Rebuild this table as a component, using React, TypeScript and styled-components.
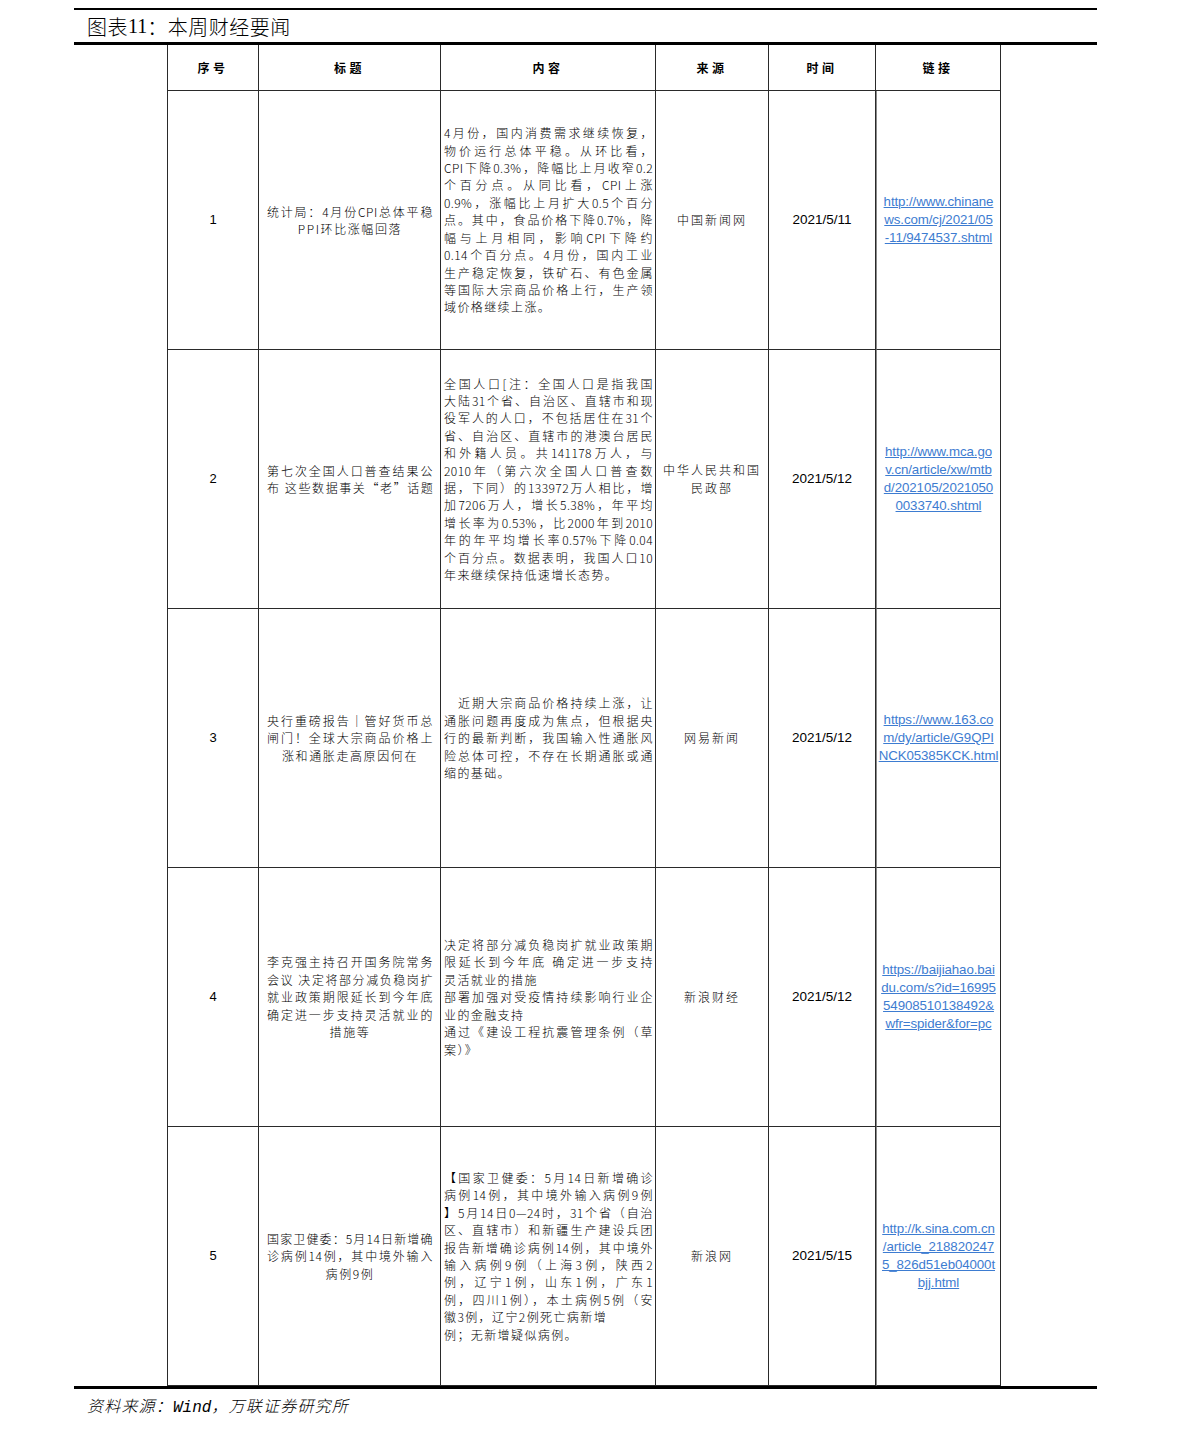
import React from 'react';
import styled, { createGlobalStyle } from 'styled-components';

const GlobalStyle = createGlobalStyle`
  html, body {
    margin: 0;
    padding: 0;
    background: #ffffff;
  }
`;

type NewsRow = {
  no: string,
  title: string[],
  content: string[][],
  source: string[],
  date: string,
  link: string[]
};

const columns = ['序号', '标题', '内容', '来源', '时间', '链接'];

const rows: NewsRow[] = [
  {
    no: '1',
    title: ['统计局：4月份CPI总体平稳', 'PPI环比涨幅回落'],
    content: [[
      '4月份，国内消费需求继续恢复，',
      '物价运行总体平稳。从环比看，',
      'CPI下降0.3%，降幅比上月收窄0.2',
      '个百分点。从同比看，CPI上涨',
      '0.9%，涨幅比上月扩大0.5个百分',
      '点。其中，食品价格下降0.7%，降',
      '幅与上月相同，影响CPI下降约',
      '0.14个百分点。4月份，国内工业',
      '生产稳定恢复，铁矿石、有色金属',
      '等国际大宗商品价格上行，生产领',
      '域价格继续上涨。'
    ]],
    source: ['中国新闻网'],
    date: '2021/5/11',
    link: ['http://www.chinane', 'ws.com/cj/2021/05', '-11/9474537.shtml']
  },
  {
    no: '2',
    title: ['第七次全国人口普查结果公', '布 这些数据事关“老”话题'],
    content: [[
      '全国人口[注：全国人口是指我国',
      '大陆31个省、自治区、直辖市和现',
      '役军人的人口，不包括居住在31个',
      '省、自治区、直辖市的港澳台居民',
      '和外籍人员。共141178万人，与',
      '2010年（第六次全国人口普查数',
      '据，下同）的133972万人相比，增',
      '加7206万人，增长5.38%，年平均',
      '增长率为0.53%，比2000年到2010',
      '年的年平均增长率0.57%下降0.04',
      '个百分点。数据表明，我国人口10',
      '年来继续保持低速增长态势。'
    ]],
    source: ['中华人民共和国', '民政部'],
    date: '2021/5/12',
    link: ['http://www.mca.go', 'v.cn/article/xw/mtb', 'd/202105/2021050', '0033740.shtml']
  },
  {
    no: '3',
    title: ['央行重磅报告｜管好货币总', '闸门！全球大宗商品价格上', '涨和通胀走高原因何在'],
    content: [[
      '\u3000近期大宗商品价格持续上涨，让',
      '通胀问题再度成为焦点，但根据央',
      '行的最新判断，我国输入性通胀风',
      '险总体可控，不存在长期通胀或通',
      '缩的基础。'
    ]],
    source: ['网易新闻'],
    date: '2021/5/12',
    link: ['https://www.163.co', 'm/dy/article/G9QPI', 'NCK05385KCK.html']
  },
  {
    no: '4',
    title: ['李克强主持召开国务院常务', '会议 决定将部分减负稳岗扩', '就业政策期限延长到今年底', '确定进一步支持灵活就业的', '措施等'],
    content: [
      ['决定将部分减负稳岗扩就业政策期', '限延长到今年底 确定进一步支持', '灵活就业的措施'],
      ['部署加强对受疫情持续影响行业企', '业的金融支持'],
      ['通过《建设工程抗震管理条例（草', '案）》']
    ],
    source: ['新浪财经'],
    date: '2021/5/12',
    link: ['https://baijiahao.bai', 'du.com/s?id=16995', '54908510138492&', 'wfr=spider&for=pc']
  },
  {
    no: '5',
    title: ['国家卫健委：5月14日新增确', '诊病例14例，其中境外输入', '病例9例'],
    content: [
      [
        '【国家卫健委：5月14日新增确诊',
        '病例14例，其中境外输入病例9例',
        '】5月14日0—24时，31个省（自治',
        '区、直辖市）和新疆生产建设兵团',
        '报告新增确诊病例14例，其中境外',
        '输入病例9例（上海3例，陕西2',
        '例，辽宁1例，山东1例，广东1',
        '例，四川1例），本土病例5例（安',
        '徽3例，辽宁2例死亡病新增'
      ],
      ['例；无新增疑似病例。']
    ],
    source: ['新浪网'],
    date: '2021/5/15',
    link: ['http://k.sina.com.cn', '/article_218820247', '5_826d51eb04000t', 'bjj.html']
  }
];

const cjk = '"Noto Sans CJK SC", "Liberation Sans", sans-serif';

const Page = styled.div`
  width: 1023px;
  margin-left: 74px;
  padding-top: 8px;
  color: #000000;
`;

const Rule = styled.div<{ $weight: number }>`
  height: ${({ $weight }) => $weight}px;
  background: #000000;
`;

const Caption = styled.div`
  height: 32px;
  display: flex;
  align-items: center;
  padding-left: 13px;
  font-family: "Liberation Serif", "Noto Sans CJK SC", serif;
  font-size: 20px;
  color: #000000;
`;

const CaptionText = styled.span`
  font-family: "Noto Sans CJK SC", serif;
  font-weight: 300;
  letter-spacing: 0.5px;
`;

const TableWrap = styled.div`
  padding-left: 93px;
`;

const Table = styled.div`
  display: grid;
  width: 833px;
  grid-template-columns: 91px 182px 215px 113px 107px 125px;
  grid-template-rows: 46px repeat(5, 259px);
  border-left: 1px solid #2a2a2a;
`;

const HeadCell = styled.div`
  display: flex;
  align-items: center;
  justify-content: center;
  border-right: 1px solid #2a2a2a;
  border-bottom: 1px solid #2a2a2a;
  font-family: ${cjk};
  font-size: 12px;
  font-weight: 700;
  letter-spacing: 3.5px;
  color: #000000;
`;

const Cell = styled.div<{ $pad?: string, $link?: boolean }>`
  display: flex;
  flex-direction: column;
  justify-content: center;
  border-right: 1px solid #2a2a2a;
  border-bottom: 1px solid #2a2a2a;
  border-left: ${({ $link }) => ($link ? '1px solid #8a8a8a' : 'none')};
  padding: ${({ $pad }) => $pad || '0'};
  font-family: ${cjk};
  font-size: 12px;
  font-weight: 300;
  line-height: 17.4px;
  color: #000000;
  overflow: hidden;
`;

const Plain = styled.div<{ $size: number }>`
  text-align: center;
  font-family: "Liberation Sans", Arial, sans-serif;
  font-size: ${({ $size }) => $size}px;
  font-weight: 400;
  color: #000000;
`;

const Line = styled.div<{ $mode: 'justify' | 'left' | 'center', $spacing: number }>`
  text-align: ${({ $mode }) => ($mode === 'justify' ? 'justify' : $mode)};
  text-align-last: ${({ $mode }) => ($mode === 'justify' ? 'justify' : $mode)};
  letter-spacing: ${({ $spacing }) => $spacing}px;
  white-space: pre;
`;

const SourceLine = styled.div`
  text-align: center;
  letter-spacing: 2px;
  line-height: 18px;
`;

const LinkText = styled.a`
  display: block;
  text-align: center;
  font-family: "Liberation Sans", Arial, sans-serif;
  font-size: 13.3px;
  font-weight: 400;
  letter-spacing: -0.1px;
  line-height: 18px;
  color: #3d7cd1;
  text-decoration: underline;
  white-space: nowrap;
`;

const Footer = styled.div`
  padding: 4px 0 0 13px;
  font-family: "Noto Sans CJK SC", "Liberation Serif", serif;
  font-style: italic;
  font-weight: 300;
  font-size: 16px;
  letter-spacing: 1.2px;
  color: #000000;
`;

const Latin = styled.span`
  font-family: "Liberation Mono", monospace;
  letter-spacing: 0;
`;

const TitleLines = ({ lines }: { lines: string[] }) => (
  <>
    {lines.map((line, i) => {
      const last = i === lines.length - 1;
      return (
        <Line key={i} $mode={last ? 'center' : 'justify'} $spacing={last ? 1.6 : 0.6}>{line}</Line>
      );
    })}
  </>
);

const ContentLines = ({ paragraphs }: { paragraphs: string[][] }) => (
  <>
    {paragraphs.map((para, p) => para.map((line, i) => {
      const last = i === para.length - 1;
      return (
        <Line key={`${p}-${i}`} $mode={last ? 'left' : 'justify'} $spacing={last ? 1.4 : 0.4}>{line}</Line>
      );
    }))}
  </>
);

const App = () => (
  <>
    <GlobalStyle />
    <Page>
      <Rule $weight={2} />
      <Caption>
        <CaptionText>图表</CaptionText>11<CaptionText>：本周财经要闻</CaptionText>
      </Caption>
      <Rule $weight={3} />
      <TableWrap>
        <Table>
          {columns.map((c) => <HeadCell key={c}>{c}</HeadCell>)}
          {rows.map((row) => (
            <React.Fragment key={row.no}>
              <Cell><Plain $size={13}>{row.no}</Plain></Cell>
              <Cell $pad={'0 7px 0 8px'}><TitleLines lines={row.title} /></Cell>
              <Cell $pad={'0 2px 0 3px'}><ContentLines paragraphs={row.content} /></Cell>
              <Cell>
                {row.source.map((s) => <SourceLine key={s}>{s}</SourceLine>)}
              </Cell>
              <Cell><Plain $size={13.5}>{row.date}</Plain></Cell>
              <Cell $link>
                {row.link.map((l) => (
                  <LinkText href={row.link.join('')} key={l}>{l}</LinkText>
                ))}
              </Cell>
            </React.Fragment>
          ))}
        </Table>
      </TableWrap>
      <Rule $weight={3} />
      <Footer>资料来源：<Latin>Wind</Latin>，万联证券研究所</Footer>
    </Page>
  </>
);

export default App;
